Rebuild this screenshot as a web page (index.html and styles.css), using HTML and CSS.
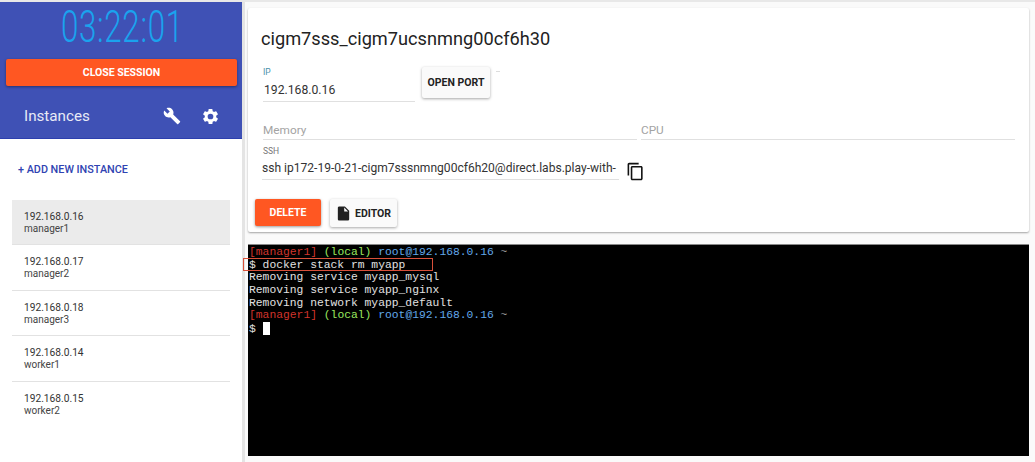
FILE: index.html
```html
<!DOCTYPE html>
<html lang="en">
<head>
<meta charset="utf-8">
<title>Play with Docker</title>
<link rel="stylesheet" href="styles.css">
</head>
<body>
<div class="app">
  <aside class="sidebar">
    <header class="side-head">
      <div class="clock"><span>03:22:01</span></div>
      <button class="close-btn">CLOSE SESSION</button>
      <div class="side-title">
        <span class="title-text">Instances</span>
        <svg class="wrench" viewBox="0 0 24 24"><path d="M22.7 19l-9.1-9.1c.9-2.3.4-5-1.5-6.9-2-2-5-2.4-7.4-1.3L9 6 6 9 1.6 4.700C.4 7.100.9 10.100 2.900 12.100c1.900 1.900 4.600 2.400 6.900 1.500l9.100 9.100c.4.4 1 .4 1.400 0l2.300-2.300c.5-.4.5-1.100.1-1.400z"/></svg>
        <svg class="gear" viewBox="0 0 24 24"><path d="M19.14 12.94c.04-.3.06-.61.06-.94 0-.32-.02-.64-.07-.94l2.03-1.58a.49.49 0 0 0 .12-.61l-1.92-3.32a.488.488 0 0 0-.59-.22l-2.39.96c-.5-.38-1.03-.7-1.62-.94l-.36-2.54a.484.484 0 0 0-.48-.41h-3.84c-.24 0-.43.17-.47.41l-.36 2.54c-.59.24-1.13.57-1.62.94l-2.39-.96c-.22-.08-.47 0-.59.22L2.74 8.87c-.12.21-.08.47.12.61l2.03 1.58c-.05.3-.09.63-.09.94s.02.64.07.94l-2.03 1.58a.49.49 0 0 0-.12.61l1.92 3.32c.12.22.37.29.59.22l2.39-.96c.5.38 1.03.7 1.62.94l.36 2.54c.05.24.24.41.48.41h3.84c.24 0 .44-.17.47-.41l.36-2.54c.59-.24 1.13-.56 1.62-.94l2.39.96c.22.08.47 0 .59-.22l1.92-3.32c.12-.22.07-.47-.12-.61l-2.01-1.58zM12 15.6A3.6 3.6 0 1 1 12 8.4a3.6 3.6 0 0 1 0 7.2z"/></svg>
      </div>
    </header>
    <div class="add-instance">+ ADD NEW INSTANCE</div>
    <ul class="instances">
      <li class="instance selected"><span class="ip">192.168.0.16</span><span class="name">manager1</span></li>
      <li class="instance"><span class="ip">192.168.0.17</span><span class="name">manager2</span></li>
      <li class="instance"><span class="ip">192.168.0.18</span><span class="name">manager3</span></li>
      <li class="instance"><span class="ip">192.168.0.14</span><span class="name">worker1</span></li>
      <li class="instance last"><span class="ip">192.168.0.15</span><span class="name">worker2</span></li>
    </ul>
  </aside>
  <main class="main">
    <section class="card">
      <h1 class="host">cigm7sss_cigm7ucsnmng00cf6h30</h1>
      <div class="ip-row">
        <div class="ip-field">
          <label class="ip-label">IP</label>
          <div class="ip-value">192.168.0.16</div>
        </div>
        <button class="btn open-port">OPEN PORT</button>
        <span class="dash"></span>
      </div>
      <div class="stats">
        <div class="stat memory">Memory</div>
        <div class="stat cpu">CPU</div>
      </div>
      <label class="ssh-label">SSH</label>
      <div class="ssh-row">
        <div class="ssh-value">ssh ip172-19-0-21-cigm7sssnmng00cf6h20@direct.labs.play-with-</div>
        <svg class="copy" viewBox="0 0 24 24"><path d="M16 1H4c-1.1 0-2 .9-2 2v14h2V3h12V1zm3 4H8c-1.1 0-2 .9-2 2v14c0 1.1.9 2 2 2h11c1.1 0 2-.9 2-2V7c0-1.1-.9-2-2-2zm0 16H8V7h11v14z"/></svg>
      </div>
      <div class="actions">
        <button class="delete-btn">DELETE</button>
        <button class="btn editor">
          <svg class="file" viewBox="0 0 24 24"><path d="M6 2c-1.1 0-2 .9-2 2v16c0 1.1.9 2 2 2h12c1.100 0 2-.9 2-2V8l-6-6H6zm7 7V3.500L18.500 9H13z"/></svg>
          EDITOR
        </button>
      </div>
    </section>
    <section class="terminal">
      <div class="line"><span class="t-red">[manager1]</span> <span class="t-green">(local)</span> <span class="t-blue">root@192.168.0.16</span> <span class="t-grey">~</span></div>
      <div class="line">$ docker stack rm myapp</div>
      <div class="line">Removing service myapp_mysql</div>
      <div class="line">Removing service myapp_nginx</div>
      <div class="line">Removing network myapp_default</div>
      <div class="line"><span class="t-red">[manager1]</span> <span class="t-green">(local)</span> <span class="t-blue">root@192.168.0.16</span> <span class="t-grey">~</span></div>
      <div class="line">$ <span class="cursor"></span></div>
      <div class="highlight"></div>
    </section>
  </main>
</div>
</body>
</html>
```
FILE: styles.css
```css
* { box-sizing: border-box; }
html, body { margin: 0; height: 100%; }
body { background: #fafafa; font-family: Roboto, "Liberation Sans", sans-serif; overflow: hidden; }
button { font-family: inherit; border: 0; cursor: pointer; white-space: nowrap; padding: 0; }

.app { display: flex; height: 462px; border-top: 2px solid #e8e8e8; }

.sidebar { width: 245px; flex: none; background: #fff; border-right: 3px solid #e4e4e4; }
.side-head { height: 137px; background: #3f51b5; border-bottom: 1px solid #2c3fae; padding: 0 6px; }
.clock { height: 57px; display: flex; justify-content: center; padding-left: 3px; }
.clock span { font-size: 45px; line-height: 50px; font-weight: 300; letter-spacing: 1px; color: #1aa3ee; display: block; transform: scaleX(.695); white-space: nowrap; }
.close-btn { display: block; width: 231px; height: 27px; background: #ff5722; color: #fff; font-size: 10.500px; font-weight: 700; border-radius: 2px; box-shadow: 0 1px 3px rgba(0,0,0,.4); }
.side-title { display: flex; align-items: center; padding: 0 0 0 18px; margin-top: 18px; height: 24px; color: #fff; }
.title-text { font-size: 15.200px; width: 139px; color: #e8eaf6; }
.wrench { width: 18px; height: 18px; fill: #fff; }
.gear { width: 19px; height: 19px; fill: #fff; margin-left: 20px; }

.add-instance { padding: 24px 0 0 18px; height: 61px; font-size: 10.800px; font-weight: 500; color: #2f43b2; }
.instances { list-style: none; margin: 0; padding: 0 12px; width: 242px; }
.instance { height: 45.400px; border-bottom: 1px solid #e2e2e2; padding: 11px 12px 0; font-size: 10px; color: #333; display: flex; flex-direction: column; }
.instance .ip { line-height: 12px; font-size: 10.200px; }
.instance .name { line-height: 12px; color: #444; }
.instance.selected { background: #ebebeb; }
.instance.last { border-bottom: 0; }

.main { flex: 1; padding: 6px 6px 0 3px; display: flex; flex-direction: column; }
.card { height: 224px; background: #fff; border-radius: 2px; box-shadow: 0 1px 2px rgba(0,0,0,.35); padding: 20px 13px 0 13px; }
.host { margin: 0; font-size: 18.200px; font-weight: 400; line-height: 22px; color: #222; }

.ip-row { display: flex; align-items: flex-start; margin-top: 4px; height: 66px; }
.ip-field { width: 152px; margin-left: 2px; }
.ip-label { display: block; font-size: 8.500px; line-height: 10px; margin-top: 13px; color: #4a90a8; }
.ip-value { font-size: 12.200px; line-height: 16px; padding: 5px 0 0 1px; border-bottom: 1px solid #e0e0e0; color: #333; height: 25px; }
.btn { background: #fafafa; color: #222; font-size: 10.500px; font-weight: 700; border-radius: 2px; box-shadow: 0 1px 3px rgba(0,0,0,.35); }
.open-port { width: 68px; height: 31px; margin: 13px 0 0 7px; }
.dash { width: 4px; height: 1px; background: #ddd; margin: 17px 0 0 6px; }

.stats { display: flex; height: 24px; margin-left: 2px; margin-top: -2px; }
.stat { font-size: 11.800px; line-height: 16px; padding-top: 4px; color: #a3a3a3; border-bottom: 1px solid #e0e0e0; height: 22px; }
.memory { width: 374px; }
.cpu { width: 374px; margin-left: 4px; }

.ssh-label { display: block; font-size: 8.500px; line-height: 10px; margin: 4px 0 0 2px; color: #777; }
.ssh-row { display: flex; align-items: flex-start; margin-top: 2px; }
.ssh-value { width: 357px; margin-left: 1px; font-size: 12.050px; line-height: 16px; height: 22px; padding: 2px 0 0 0; border-bottom: 1px solid #e0e0e0; color: #333; white-space: nowrap; overflow: hidden; }
.copy { width: 19px; height: 19px; margin: 4px 0 0 7px; fill: #111; }

.actions { display: flex; gap: 9px; margin-top: 18px; margin-left: -6px; }
.delete-btn { width: 66px; height: 27px; background: #ff5722; color: #fff; font-size: 10.500px; font-weight: 700; border-radius: 2px; box-shadow: 0 1px 3px rgba(0,0,0,.4); }
.editor { width: 67px; height: 28px; display: flex; align-items: center; padding: 0 0 0 5px; gap: 3px; }
.file { width: 17px; height: 17px; fill: #222; }

.terminal { position: relative; margin-top: 12px; height: 212px; background: #000; border-top: 1px solid #888; padding: 1px 0 0 1px; font-family: "Liberation Mono", "Courier New", monospace; font-size: 11.330px; color: #e0e0e0; }
.line { height: 12.670px; line-height: 12.670px; white-space: pre; }
.t-red { color: #d0342c; }
.t-green { color: #9be85f; }
.t-blue { color: #62a8ea; }
.t-grey { color: #999; }
.cursor { display: inline-block; width: 7px; height: 13px; background: #fff; vertical-align: -3px; }
.highlight { position: absolute; left: -5px; top: 13px; width: 190px; height: 13px; border: 1px solid #d8503a; }
```
